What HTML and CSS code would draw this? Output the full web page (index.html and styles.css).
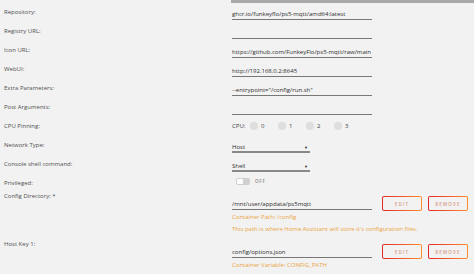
FILE: index.html
```html
<!DOCTYPE html>
<html lang="en">
<head>
    <meta charset="UTF-8">
    <title>Edit Container</title>
    <link rel="stylesheet" href="styles.css">
</head>
<body>
    <div class="top-bar"></div>

    <div class="row">
        <div class="label">Repository:</div>
        <div class="field"><div class="input">ghcr.io/funkeyflo/ps5-mqtt/amd64:latest</div></div>
    </div>
    <div class="row">
        <div class="label">Registry URL:</div>
        <div class="field"><div class="input"></div></div>
    </div>
    <div class="row">
        <div class="label">Icon URL:</div>
        <div class="field"><div class="input">https://github.com/FunkeyFlo/ps5-mqtt/raw/main</div></div>
    </div>
    <div class="row">
        <div class="label">WebUI:</div>
        <div class="field"><div class="input">http://192.168.0.2:8645</div></div>
    </div>
    <div class="row">
        <div class="label">Extra Parameters:</div>
        <div class="field"><div class="input">--entrypoint="/config/run.sh"</div></div>
    </div>
    <div class="row">
        <div class="label">Post Arguments:</div>
        <div class="field"><div class="input"></div></div>
    </div>
    <div class="row">
        <div class="label">CPU Pinning:</div>
        <div class="field cpu">
            <span class="cpu-title">CPU:</span>
            <span class="cpu-item"><span class="radio"></span>0</span>
            <span class="cpu-item"><span class="radio"></span>1</span>
            <span class="cpu-item"><span class="radio"></span>2</span>
            <span class="cpu-item"><span class="radio"></span>3</span>
        </div>
    </div>
    <div class="row">
        <div class="label">Network Type:</div>
        <div class="field"><div class="input select">Host<span class="caret">&#9660;</span></div></div>
    </div>
    <div class="row">
        <div class="label">Console shell command:</div>
        <div class="field"><div class="input select">Shell<span class="caret">&#9660;</span></div></div>
    </div>
    <div class="row short">
        <div class="label">Privileged:</div>
        <div class="field toggle-field">
            <span class="toggle"><span class="knob"></span></span>
            <span class="toggle-text">OFF</span>
        </div>
    </div>

    <div class="row config">
        <div class="label">Config Directory: <span class="req">*</span></div>
        <div class="field">
            <div class="path-line">
                <div class="input path">/mnt/user/appdata/ps5mqtt</div>
                <button class="btn">EDIT</button>
                <button class="btn">REMOVE</button>
            </div>
            <div class="help">Container Path: /config</div>
            <div class="help">This path is where Home Assistant will store it's configuration files.</div>
        </div>
    </div>
    <div class="row config">
        <div class="label">Host Key 1:</div>
        <div class="field">
            <div class="path-line">
                <div class="input path">config/options.json</div>
                <button class="btn">EDIT</button>
                <button class="btn">REMOVE</button>
            </div>
            <div class="help">Container Variable: CONFIG_PATH</div>
        </div>
    </div>
</body>
</html>
```

FILE: styles.css
```css
body {
    margin: 0;
    background: #f2f2f2;
    font-family: "Open Sans", "Liberation Sans", sans-serif;
    font-size: 6px;
    color: #444;
    overflow: hidden;
}
.top-bar {
    height: 3px;
    margin-left: 231px;
    background: #a8a8a8;
}
.row {
    display: flex;
    height: 19px;
    padding-left: 4px;
}
.label {
    flex: 0 0 228px;
    padding-top: 4px;
    line-height: 10px;
    color: #505050;
}
.field {
    flex: 1;
    min-width: 0;
}
.input {
    box-sizing: border-box;
    width: 140px;
    height: 17px;
    padding-top: 6px;
    line-height: 10px;
    color: #2e2e2e;
    border-bottom: 1px solid #777;
    white-space: nowrap;
    overflow: hidden;
}
.select {
    width: 78px;
    display: flex;
    justify-content: space-between;
    border-bottom: 2px solid #888;
}
.caret {
    font-size: 4px;
    color: #222;
    padding-right: 2px;
    padding-top: 1px;
}
.cpu {
    display: flex;
    align-items: center;
    padding-bottom: 2px;
    color: #444;
}
.cpu-title {
    width: 18px;
}
.cpu-item {
    display: flex;
    align-items: center;
    width: 28px;
}
.radio {
    width: 8px;
    height: 8px;
    border-radius: 50%;
    background: #dedede;
    margin-right: 3px;
}
.short {
    height: 16px;
}
.toggle-field {
    display: flex;
    align-items: center;
    height: 10px;
    padding-top: 2px;
    padding-left: 4px;
}
.toggle {
    box-sizing: border-box;
    width: 14px;
    height: 7px;
    border-radius: 2px;
    background: #cfcfcf;
    padding: 1px;
}
.knob {
    display: block;
    width: 6px;
    height: 5px;
    border-radius: 1px;
    background: #fff;
}
.toggle-text {
    margin-left: 5px;
    font-size: 4.5px;
    letter-spacing: 0.8px;
    color: #888;
    font-weight: 600;
}
.config {
    height: auto;
    margin-bottom: 3px;
}
.config .label {
    padding-top: 1px;
}
.path-line {
    display: flex;
    align-items: flex-end;
    height: 20px;
}
.path {
    flex: 0 0 140px;
}
.btn {
    box-sizing: border-box;
    flex: 0 0 40px;
    height: 15px;
    margin-left: 10px;
    margin-bottom: -1px;
    padding: 0;
    border: 1px solid transparent;
    border-radius: 2px;
    background-image: linear-gradient(#f2f2f2, #f2f2f2), linear-gradient(90deg, #e22828, #ff8c2f);
    background-origin: border-box;
    background-clip: padding-box, border-box;
    font-family: "Open Sans", "Liberation Sans", sans-serif;
    font-size: 4.5px;
    font-weight: 600;
    letter-spacing: 1.2px;
    color: #d49a86;
}
.btn + .btn {
    margin-left: 6px;
}
.help {
    line-height: 12px;
    color: #eba440;
}
.path-line + .help {
    margin-top: 1px;
}
```
